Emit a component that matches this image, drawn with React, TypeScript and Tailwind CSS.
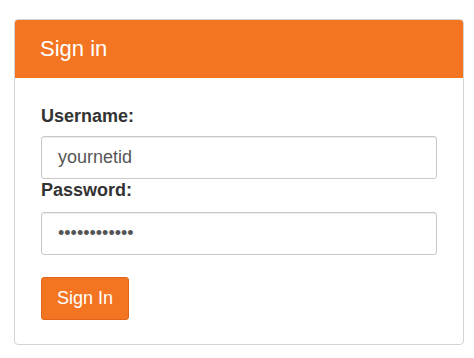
export default function App() {
  return (
    <div className="min-h-screen bg-white pl-[14px] pr-[10px] pt-[19px] font-['Liberation_Sans',Arial,sans-serif]">
      <div className="w-[450px] overflow-hidden rounded-[4px] border border-[#d4d4d4] bg-white">
        <div className="flex h-[58px] items-center bg-[#f37522] px-[25px]">
          <h1 className="text-[22px] leading-none text-white">Sign in</h1>
        </div>
        <form className="flex flex-col pl-[26px] pr-[26px] pb-[24px] pt-[28px]">
          <label className="mb-[10px] text-[18px] font-bold leading-[20px] text-[#333]">Username:</label>
          <input
            readOnly
            value="yournetid"
            className="h-[43px] w-[396px] rounded-[3px] border border-[#c8c8c8] px-[16px] text-[18px] text-[#555] shadow-[inset_0_1px_1px_rgba(0,0,0,0.075)] outline-none"
          />
          <label className="mb-[12px] mt-px text-[18px] font-bold leading-[20px] text-[#333]">Password:</label>
          <input
            readOnly
            value="••••••••••••"
            className="h-[43px] w-[396px] rounded-[3px] border border-[#c8c8c8] px-[16px] text-[18px] text-[#555] shadow-[inset_0_1px_1px_rgba(0,0,0,0.075)] outline-none"
          />
          <button
            type="button"
            className="mt-[22px] h-[43px] w-[88px] rounded-[3px] border border-[#e0661c] bg-[#f37522] text-[18px] text-white"
          >
            Sign In
          </button>
        </form>
      </div>
    </div>
  )
}
